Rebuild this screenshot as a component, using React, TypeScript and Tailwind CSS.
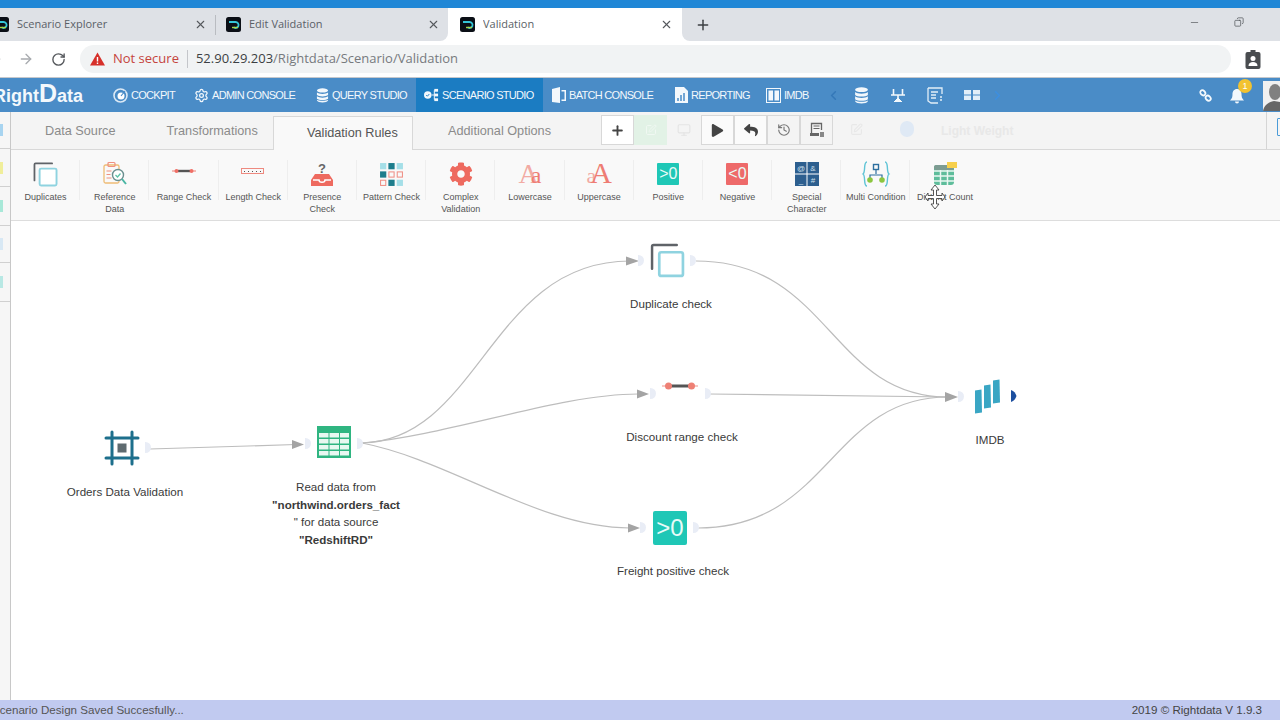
import { ArrowLeft, ArrowRight, ChevronLeft, ChevronRight, Copy, Minus, Monitor, Plus, RotateCw, Settings, SquarePen, History, X } from "lucide-react"
import { FaCog, FaPlay, FaReply } from "react-icons/fa"

function Favicon() {
    return (
        <svg width="15" height="15" viewBox="0 0 15 15" className="shrink-0">
            <rect width="15" height="15" rx="2.5" fill="#0b0f16" />
            <path d="M3 5h6.500a3 3 0 1 1-2 5.200" fill="none" stroke="#35c6d8" strokeWidth="1.800" />
            <path d="M12 10.500H6" stroke="#a7d94b" strokeWidth="1.400" />
        </svg>
    )
}

function BrowserTab({ title, className }: { title: string, className: string }) {
    return (
        <div className={`flex items-center h-full shrink-0 ${className}`}>
            <Favicon />
            <span className="ml-2 text-[11px] text-[#5a5f66] font-['Open_Sans',sans-serif] flex-1 truncate">{title}</span>
            <X size={13} strokeWidth={2} className="text-[#55585c] shrink-0" />
        </div>
    )
}

function NavItem({ icon, label, active, className }: { icon: React.ReactNode, label: string, active?: boolean, className: string }) {
    return (
        <div className={`flex items-center h-full gap-[3px] shrink-0 ${active ? "bg-[#1b7cc2]" : ""} ${className}`}>
            {icon}
            <span className="text-[11px] tracking-[-0.7px] text-[#f3f8fc] whitespace-nowrap">{label}</span>
        </div>
    )
}

function ToolButton({ children, className }: { children?: React.ReactNode, className?: string }) {
    return (
        <div className={`w-[33px] h-[30px] flex items-center justify-center border border-[#d8d8d8] ${className || ""}`}>
            {children}
        </div>
    )
}

function CockpitIcon() {
    return (
        <svg width="15" height="15" viewBox="0 0 15 15" fill="none">
            <circle cx="7.500" cy="7.500" r="6.500" stroke="#dbe9f5" strokeWidth="1.600" />
            <circle cx="8" cy="8" r="3.500" fill="#fff" />
            <path d="M8 8l4-5" stroke="#4a8cc7" strokeWidth="1.200" />
        </svg>
    )
}

function StackIcon({ size = 13 }: { size?: number }) {
    return (
        <svg width={size} height={size + 2} viewBox="0 0 14 16" fill="#f3f8fc">
            <ellipse cx="7" cy="2.500" rx="6" ry="2.300" />
            <path d="M1 4.800c2 2 10 2 12 0v2.700c-2 2-10 2-12 0zM1 8.800c2 2 10 2 12 0v2.700c-2 2-10 2-12 0z" />
            <path d="M1 12.600c2 1.600 10 1.600 12 0v.9c-1 2.800-11 2.800-12 0z" />
        </svg>
    )
}

function ScenarioIcon() {
    return (
        <svg width="15" height="14" viewBox="0 0 16 14" fill="none">
            <circle cx="4" cy="7" r="4" fill="#f3f8fc" />
            <path d="M2.300 7l1.300 1.300 2-2.300" stroke="#1b7cc2" strokeWidth="1" />
            <path d="M8 7h3M11 2v10" stroke="#f3f8fc" strokeWidth="1" />
            <rect x="11" y="0.500" width="4" height="3" fill="#f3f8fc" />
            <rect x="11" y="5.500" width="4" height="3" fill="#f3f8fc" />
            <rect x="11" y="10.500" width="4" height="3" fill="#f3f8fc" />
        </svg>
    )
}

function BatchIcon() {
    return (
        <svg width="14" height="16" viewBox="0 0 14 16" fill="#f3f8fc">
            <path d="M0 2l8-2v16l-8-1z" />
            <path d="M9.500 3H14v11H9.500v-1.500H12.500V4.500H9.500z" />
        </svg>
    )
}

function ReportIcon() {
    return (
        <svg width="13" height="16" viewBox="0 0 13 16">
            <path d="M0 0h9l4 4v12H0z" fill="#f3f8fc" />
            <path d="M3 14v-3M6 14V8M9 14V6" stroke="#4a8cc7" strokeWidth="1.500" />
        </svg>
    )
}

function ColumnsIcon() {
    return (
        <svg width="15" height="15" viewBox="0 0 15 15" fill="none">
            <rect x="0.500" y="0.500" width="14" height="14" stroke="#f3f8fc" />
            <rect x="2.500" y="2.500" width="4.500" height="10" fill="#f3f8fc" />
            <rect x="8.500" y="2.500" width="4.500" height="10" fill="#f3f8fc" />
        </svg>
    )
}

function DuplicateIcon({ size }: { size: number }) {
    return (
        <svg width={size} height={size} viewBox="0 0 34 34" fill="none">
            <path d="M2 25V3.500C2 2.500 2.500 2 3.500 2H26" stroke="#5f6368" strokeWidth="2.400" strokeLinecap="round" />
            <rect x="9" y="9" width="23" height="23" rx="2" fill="#fff" stroke="#8fd3e0" strokeWidth="2.600" />
        </svg>
    )
}

function Badge({ text, className }: { text: string, className: string }) {
    return (
        <div className={`flex items-center justify-center text-[#e9fbf8] font-['Liberation_Sans',sans-serif] ${className}`}>{text}</div>
    )
}

function Port({ className }: { className: string }) {
    return <div className={`absolute w-[6px] h-[11px] rounded-r-full bg-[#e9edf6] ${className}`} />
}

function NodeLabel({ className, children }: { className: string, children: React.ReactNode }) {
    return <div className={`absolute text-[11.600px] text-[#3a3a3a] text-center ${className}`}>{children}</div>
}

const ruleLabels: { label: React.ReactNode, icon: React.ReactNode }[] = [
    { label: "Duplicates", icon: <DuplicateIcon size={25} /> },
    {
        label: <>Reference<br />Data</>,
        icon: (
            <svg width="26" height="26" viewBox="0 0 26 26" fill="none">
                <rect x="2" y="4" width="15" height="18" rx="1.500" stroke="#eebc76" strokeWidth="1.300" />
                <rect x="6" y="1.500" width="7" height="4" rx="1" stroke="#ef8f7f" strokeWidth="1.200" />
                <path d="M4.500 10h5M4.500 13.500h4M4.500 17h5" stroke="#ef8f7f" strokeWidth="1.200" />
                <circle cx="16" cy="14" r="5.500" stroke="#6a8f8f" strokeWidth="1.400" fill="#fff" />
                <path d="M13.500 14l2 2 3-3.500" stroke="#5cc3a8" strokeWidth="1.300" />
                <path d="M20 18l4 5" stroke="#49b6a4" strokeWidth="2" />
            </svg>
        ),
    },
    {
        label: "Range Check",
        icon: (
            <svg width="26" height="26" viewBox="0 0 26 26">
                <path d="M1 10h24" stroke="#ef7f74" strokeWidth="1" />
                <path d="M7 10h12" stroke="#555" strokeWidth="2.400" />
                <circle cx="5.500" cy="10" r="2" fill="#ef6f66" />
                <circle cx="20.500" cy="10" r="2" fill="#ef6f66" />
            </svg>
        ),
    },
    {
        label: "Length Check",
        icon: (
            <svg width="26" height="26" viewBox="0 0 26 26">
                <rect x="1.500" y="7.500" width="22" height="5" fill="none" stroke="#ee8a80" strokeWidth="1" />
                <path d="M4 10.500h1M8 10.500h1M12 10.500h1M16 10.500h1M20 10.500h1" stroke="#555" strokeWidth="1.200" />
            </svg>
        ),
    },
    {
        label: <>Presence<br />Check</>,
        icon: (
            <svg width="26" height="26" viewBox="0 0 26 26">
                <path d="M2 25v-6l4-6h14l4 6v6z" fill="#ee6a5f" />
                <path d="M4 19h6c0 3 6 3 6 0h6" fill="none" stroke="#fff" strokeWidth="1.500" />
                <text x="13" y="12" textAnchor="middle" fontSize="13" fontWeight="700" fill="#666" fontFamily="Liberation Sans">?</text>
            </svg>
        ),
    },
    {
        label: "Pattern Check",
        icon: (
            <svg width="25" height="25" viewBox="0 0 24 24" fill="none">
                <rect x="1" y="1" width="6" height="6" fill="#a5dfe8" />
                <rect x="9" y="1" width="6" height="6" fill="#1d7d8c" />
                <rect x="17" y="1" width="6" height="6" fill="#a5dfe8" />
                <rect x="1" y="9" width="6" height="6" fill="#1d7d8c" />
                <rect x="9.500" y="9.500" width="5" height="5" stroke="#ef8f85" />
                <rect x="17.500" y="9.500" width="5" height="5" stroke="#ef8f85" />
                <rect x="1.500" y="17.500" width="5" height="5" stroke="#ef8f85" />
                <rect x="9" y="17" width="6" height="6" fill="#1d7d8c" />
                <rect x="17" y="17" width="6" height="6" fill="#a5dfe8" />
            </svg>
        ),
    },
    { label: <>Complex<br />Validation</>, icon: <FaCog size={24} color="#ee6a5f" /> },
    {
        label: "Lowercase",
        icon: (
            <span className="text-[28px] leading-[26px] text-[#f2aaa3] font-['Liberation_Serif',serif]">A<span className="-ml-[8px] text-[#ee7d74] text-[24px]">a</span></span>
        ),
    },
    {
        label: "Uppercase",
        icon: (
            <span className="text-[30px] leading-[26px] text-[#ee7d74] font-['Liberation_Serif',serif]"><span className="text-[#f2aaa3] text-[22px]">a</span><span className="-ml-[6px]">A</span></span>
        ),
    },
    { label: "Positive", icon: <Badge text=">0" className="bg-[#1fc7b6] w-[22px] h-[22px] text-[16px] rounded-[1px]" /> },
    { label: "Negative", icon: <Badge text="<0" className="bg-[#ee6a6a] w-[22px] h-[22px] text-[16px] rounded-[1px]" /> },
    {
        label: <>Special<br />Character</>,
        icon: (
            <svg width="24" height="24" viewBox="0 0 24 24">
                <rect width="24" height="24" fill="#2d5f8f" />
                <path d="M12 0v24M0 12h24" stroke="#fff" strokeWidth="1" />
                <text x="6" y="9" textAnchor="middle" fontSize="8" fill="#cfe0ee" fontFamily="Liberation Sans">@</text>
                <text x="18" y="9" textAnchor="middle" fontSize="8" fill="#cfe0ee" fontFamily="Liberation Sans">&amp;</text>
                <text x="6" y="21" textAnchor="middle" fontSize="8" fill="#cfe0ee" fontFamily="Liberation Sans">_</text>
                <text x="18" y="21" textAnchor="middle" fontSize="8" fill="#cfe0ee" fontFamily="Liberation Sans">#</text>
            </svg>
        ),
    },
    {
        label: "Multi Condition",
        icon: (
            <svg width="30" height="26" viewBox="0 0 30 26" fill="none">
                <path d="M6 1C2 1 5 11 2 13c3 2 0 12 4 12M24 1c4 0 1 10 4 12-3 2 0 12-4 12" stroke="#5fc4d6" strokeWidth="1.400" />
                <rect x="12.500" y="3.500" width="5" height="5" stroke="#2d6f9f" strokeWidth="1.400" />
                <path d="M15 9v4M9 18v-4h12v4" stroke="#2d6f9f" strokeWidth="1.200" />
                <circle cx="9" cy="19" r="2.800" fill="#8cc63f" />
                <circle cx="21" cy="19" r="2.800" fill="#8cc63f" />
            </svg>
        ),
    },
    {
        label: "Distinct Count",
        icon: (
            <svg width="24" height="24" viewBox="0 0 24 24">
                <rect x="1" y="3" width="20" height="20" rx="3" fill="#5ebd9b" />
                <path d="M1 9h20M1 14h20M1 19h20M7.500 8v15M14.500 8v15" stroke="#eaf7f2" strokeWidth="1.500" />
                <rect x="1" y="3" width="20" height="5" rx="2" fill="#7d9c92" />
                <rect x="14" y="0" width="10" height="6" fill="#f7d04c" />
            </svg>
        ),
    },
]

const sideBlocks = [
    { height: "h-[37px]", mark: "bg-[#a8d4f0]" },
    { height: "h-[38px]", mark: "bg-[#f0ee9a]" },
    { height: "h-[39px]", mark: "bg-[#a8e8d8]" },
    { height: "h-[37px]", mark: "bg-[#d8e8f4]" },
    { height: "h-[39px]", mark: "bg-[#b8e8e4]" },
]

export default function App() {
    return (
        <div className="w-[1280px] h-[720px] overflow-hidden flex flex-col bg-white font-['Liberation_Sans',Arial,sans-serif]">
            <div className="h-[8px] bg-[#2087d6]" />

            {/* browser tabs */}
            <div className="h-[33px] bg-white flex">
                <div className="w-[448px] bg-[#dee1e6] rounded-br-lg flex items-center shrink-0">
                    <BrowserTab title="Scenario Explorer" className="w-[213px] -ml-[6px]" />
                    <div className="w-px h-[20px] bg-[#b9bcc1] ml-[8px]" />
                    <BrowserTab title="Edit Validation" className="w-[214px] ml-[10px]" />
                </div>
                <BrowserTab title="Validation" className="w-[234px] pl-[12px] pr-[9px]" />
                <div className="flex-1 bg-[#dee1e6] rounded-bl-lg flex items-center">
                    <Plus size={16} strokeWidth={2.200} className="ml-[13px] text-[#3c3f43]" />
                    <div className="ml-auto flex items-center -mr-[9px] gap-[34px] text-[#55585c] -mt-[5px]">
                        <Minus size={11} strokeWidth={1.500} />
                        <Copy size={10} strokeWidth={1.800} className="-scale-x-100" />
                        <X size={11} strokeWidth={1.500} />
                    </div>
                </div>
            </div>

            {/* address bar */}
            <div className="h-[37px] bg-white flex items-center border-b border-[#c6c8cc] shrink-0">
                <ArrowLeft size={16} className="-ml-[13px] text-[#8a8d91] shrink-0" />
                <ArrowRight size={16} className="ml-[15px] text-[#a8abaf] shrink-0" />
                <RotateCw size={15} strokeWidth={2.200} className="ml-[17px] text-[#55585c] shrink-0" />
                <div className="ml-[14px] w-[1151px] h-[28px] rounded-full bg-[#f1f3f4] flex items-center pl-[10px] font-['Open_Sans',sans-serif] text-[13px] shrink-0">
                    <svg width="15" height="14" viewBox="0 0 15 14">
                        <path d="M7.500 0.500L15 13.500H0z" fill="#d6302a" />
                        <path d="M7.500 5v4.500M7.500 10.500v1.500" stroke="#fff" strokeWidth="1.400" />
                    </svg>
                    <span className="ml-[8px] text-[#c5443c]">Not secure</span>
                    <div className="w-px h-[18px] bg-[#c4c6ca] ml-[8px] mr-[8px]" />
                    <span className="text-[#3c3f43]">52.90.29.203</span>
                    <span className="text-[#777a7e]">/Rightdata/Scenario/Validation</span>
                </div>
                <svg width="16" height="19" viewBox="0 0 16 19" className="ml-[14px] shrink-0">
                    <rect x="0.500" y="2" width="15" height="17" rx="2" fill="#494c50" />
                    <rect x="5.500" y="0" width="5" height="4" fill="#494c50" />
                    <circle cx="8" cy="8.500" r="2.500" fill="#fff" />
                    <path d="M3.500 16c0-3 2-4 4.500-4s4.500 1 4.500 4z" fill="#fff" />
                </svg>
            </div>

            {/* app nav */}
            <div className="h-[34px] bg-[#4a8cc7] flex items-center relative shrink-0">
                <div className="w-[120px] -ml-[7px] shrink-0 text-[18px] font-bold text-[#f3f8fc] whitespace-nowrap">
                    Right<span className="text-[25px] leading-[25px]">D</span>ata
                </div>
                <NavItem className="w-[81px]" icon={<CockpitIcon />} label="COCKPIT" />
                <NavItem className="w-[122px]" icon={<Settings size={15} className="text-[#f3f8fc]" />} label="ADMIN CONSOLE" />
                <NavItem className="w-[100px]" icon={<StackIcon />} label="QUERY STUDIO" />
                <NavItem active className="w-[127px] pl-[8px]" icon={<ScenarioIcon />} label="SCENARIO STUDIO" />
                <NavItem className="w-[123px] ml-[9px]" icon={<BatchIcon />} label="BATCH CONSOLE" />
                <NavItem className="w-[91px]" icon={<ReportIcon />} label="REPORTING" />
                <NavItem className="w-[60px]" icon={<ColumnsIcon />} label="IMDB" />
                <ChevronLeft size={15} strokeWidth={2.500} className="text-[#3478b8] shrink-0" />
                <div className="ml-[12px] w-[16px] flex justify-center"><StackIcon size={15} /></div>
                <svg width="16" height="14" viewBox="0 0 16 14" className="ml-[21px]" fill="none" stroke="#f3f8fc">
                    <path d="M1 7h14M3.500 1v6M12.500 1v6M8 7v3" strokeWidth="1.600" />
                    <path d="M4 14l4-4 4 4z" fill="#f3f8fc" />
                </svg>
                <svg width="16" height="17" viewBox="0 0 16 17" className="ml-[21px]" fill="none" stroke="#e2eef8" strokeWidth="1.300">
                    <path d="M1 1h14v6M1 1v13l3 2h7" />
                    <path d="M4 5h7M4 8h5M4 11h5M13 10h2M13 13h2" />
                </svg>
                <svg width="16" height="10" viewBox="0 0 16 10" className="ml-[21px]" fill="#e2eef8">
                    <rect width="7" height="4.500" /><rect x="9" width="7" height="4.500" />
                    <rect y="5.500" width="7" height="4.500" /><rect x="9" y="5.500" width="7" height="4.500" />
                </svg>
                <ChevronRight size={15} strokeWidth={2.500} className="ml-[10px] text-[#3d8fe0] shrink-0" />
                <svg width="13" height="13" viewBox="0 0 13 13" fill="none" stroke="#f3f8fc" strokeWidth="1.800" className="absolute left-[1199px] top-[11px]">
                    <ellipse cx="3.800" cy="3.800" rx="2.800" ry="2.200" transform="rotate(45 3.800 3.800)" />
                    <ellipse cx="9.200" cy="9.200" rx="2.800" ry="2.200" transform="rotate(45 9.200 9.200)" />
                </svg>
                <svg width="14" height="15" viewBox="0 0 14 15" className="absolute left-[1230px] top-[11px]" fill="#f3f8fc">
                    <path d="M7 0c3 0 4.500 2.500 4.500 5 0 3 .5 4.500 2.500 6.500H0C2 9.500 2.500 8 2.500 5 2.500 2.500 4 0 7 0z" />
                    <path d="M5 12.500h4a2 2 0 0 1-4 0z" />
                </svg>
                <div className="absolute left-[1238px] top-[1px] w-[14px] h-[14px] rounded-full bg-[#f2c230] text-[9px] leading-[14px] text-center text-white">1</div>
                <svg width="17" height="30" viewBox="0 0 17 30" className="absolute left-[1263px] top-[3px]">
                    <rect width="17" height="30" fill="#f0f0f0" />
                    <ellipse cx="12" cy="11" rx="6" ry="8" fill="#808080" />
                    <path d="M0 30c1-6 6-9 11-10l6 1v9z" fill="#666" />
                </svg>
            </div>

            {/* main */}
            <div className="flex-1 flex min-h-0 border-t border-[#a8c6e6] -mt-px">
                <div className="w-[11px] bg-[#f6f6f6] border-r border-[#c8c8c8] shrink-0 flex flex-col">
                    {sideBlocks.map((block, i) => (
                        <div key={i} className={`${block.height} border-b border-[#d0d0d0] flex items-center`}>
                            <div className={`w-[3px] h-[12px] ${block.mark}`} />
                        </div>
                    ))}
                </div>
                <div className="flex-1 flex flex-col min-w-0">
                    <div className="h-[38px] bg-[#f4f4f4] border-b border-[#d8d8d8] flex items-end relative shrink-0">
                        <div className="flex items-center w-[262px] h-[37px] pt-[3px] text-[12.700px] text-[#8b8b8b] shrink-0">
                            <span className="ml-[34px]">Data Source</span>
                            <span className="ml-[51px]">Transformations</span>
                        </div>
                        <div className="w-[140px] h-[34px] -mb-px bg-[#f9f9f9] border border-[#d8d8d8] border-b-0 flex items-center pl-[33px] text-[12.700px] text-[#555] shrink-0">Validation Rules</div>
                        <span className="ml-[35px] h-[37px] pt-[3px] flex items-center text-[12.700px] text-[#8b8b8b]">Additional Options</span>
                        <div className="absolute left-[590px] top-[3px] flex">
                            <ToolButton className="bg-white border-[#c4c4c4]"><Plus size={15} strokeWidth={3} className="text-[#444]" /></ToolButton>
                            <ToolButton className="bg-[#e2f2e6] border-transparent"><SquarePen size={12} className="text-[#f0f8f2]" /></ToolButton>
                            <ToolButton className="border-transparent"><Monitor size={14} className="text-[#e4e4e4]" /></ToolButton>
                            <ToolButton className="bg-[#fbfbfb] border-[#c4c4c4] ml-px"><FaPlay size={13} color="#444" /></ToolButton>
                            <ToolButton className="bg-[#fbfbfb] border-[#c4c4c4]"><FaReply size={14} color="#444" /></ToolButton>
                            <ToolButton><History size={14} strokeWidth={2} className="text-[#777]" /></ToolButton>
                            <ToolButton>
                                <svg width="16" height="16" viewBox="0 0 16 16" fill="none">
                                    <path d="M2.500 13V1.500h10V8" stroke="#666" strokeWidth="1.300" />
                                    <path d="M4.500 4h6M4.500 6.500h6" stroke="#666" strokeWidth="1.200" />
                                    <path d="M1 11h9v3H1z" fill="#666" />
                                    <path d="M11 10h4v5h-4z" fill="#888" />
                                </svg>
                            </ToolButton>
                            <SquarePen size={13} className="ml-[17px] mt-[8px] text-[#e8e8e8]" />
                            <div className="ml-[37px] mt-[6px] w-[14px] h-[16px] rounded-full bg-[#dfe9f5]" />
                            <span className="ml-[27px] mt-[7px] text-[12px] text-[#e8e8e8] font-bold whitespace-nowrap">Light Weight</span>
                        </div>
                        <div className="absolute left-[1255px] top-0 bottom-0 w-px bg-[#d5d5d5]" />
                        <div className="absolute left-[1266px] top-[6px] w-[10px] h-[18px] border border-[#4a9bd8] rounded-[1px]" />
                    </div>

                    <div className="h-[71px] bg-[#f9f9f9] border-b border-[#dddddd] flex shrink-0">
                        {ruleLabels.map((rule, i) => (
                            <div key={i} className="w-[69.2px] shrink-0 flex flex-col items-center relative">
                                <div className="h-[26px] mt-[11px] flex items-center justify-center">{rule.icon}</div>
                                <div className="mt-[4px] text-[9px] leading-[12px] text-[#555] text-center whitespace-nowrap">{rule.label}</div>
                                {i < ruleLabels.length - 1 && <div className="absolute right-0 top-[10px] h-[40px] w-px bg-[#eeeeee]" />}
                            </div>
                        ))}
                    </div>

                    {/* canvas */}
                    <div className="flex-1 relative">
                        <svg width="1269" height="479" viewBox="11 221 1269 479" fill="none" className="absolute left-0 top-0">
                            <g stroke="#bdbdbd" strokeWidth="1.200">
                                <path d="M150 449L296 444.500" />
                                <path d="M362 443C480 440 490 261 630 261" />
                                <path d="M362 443C450 435 560 394 638 394" />
                                <path d="M362 443C450 460 540 528 630 528" />
                                <path d="M696 261C830 261 830 397 948 397" />
                                <path d="M709 394L948 397" />
                                <path d="M698 528C830 528 830 397 948 397" />
                            </g>
                            <g fill="#a4a4a4">
                                <path d="M292 440l12 4.500-12 4.500z" />
                                <path d="M626 256.500l13 4.500-13 4.500z" />
                                <path d="M637 389.500l12 4.500-12 4.500z" />
                                <path d="M628 523.500l12 4.500-12 4.500z" />
                                <path d="M945 392l13 5-13 5z" />
                            </g>
                        </svg>

                        <Port className="left-[134px] top-[221px]" />
                        <Port className="left-[294px] top-[217px]" />
                        <Port className="left-[346px] top-[217px]" />
                        <Port className="left-[627px] top-[34px]" />
                        <Port className="left-[679px] top-[34px]" />
                        <Port className="left-[639px] top-[167px]" />
                        <Port className="left-[694px] top-[167px]" />
                        <Port className="left-[629px] top-[301px]" />
                        <Port className="left-[682px] top-[301px]" />
                        <Port className="left-[947px] top-[170px]" />

                        {/* nodes */}
                        <div className="absolute left-[639px] top-[22px]"><DuplicateIcon size={35} /></div>
                        <svg width="36" height="36" viewBox="0 0 36 36" className="absolute left-[93px] top-[209px]" fill="none">
                            <path d="M2 8h32M2 28h32M8 2v32M28 2v32" stroke="#1d6f8c" strokeWidth="3" strokeLinecap="round" />
                            <rect x="13.500" y="13.500" width="9" height="9" fill="#5f6b70" />
                        </svg>
                        <svg width="34" height="32" viewBox="0 0 34 32" className="absolute left-[306px] top-[205px]">
                            <rect width="34" height="32" fill="#2fb581" />
                            <g fill="#e8f8f1">
                                <rect x="2" y="7" width="9.500" height="4.500" /><rect x="12.500" y="7" width="9.500" height="4.500" /><rect x="23" y="7" width="9" height="4.500" />
                                <rect x="2" y="13" width="9.500" height="4.500" /><rect x="12.500" y="13" width="9.500" height="4.500" /><rect x="23" y="13" width="9" height="4.500" />
                                <rect x="2" y="19" width="9.500" height="4.500" /><rect x="12.500" y="19" width="9.500" height="4.500" /><rect x="23" y="19" width="9" height="4.500" />
                                <rect x="2" y="25" width="9.500" height="4.500" /><rect x="12.500" y="25" width="9.500" height="4.500" /><rect x="23" y="25" width="9" height="4.500" />
                            </g>
                        </svg>
                        <svg width="36" height="16" viewBox="0 0 36 16" className="absolute left-[651px] top-[157px]">
                            <path d="M0 8h36" stroke="#ef8f85" strokeWidth="1" />
                            <path d="M8 8h20" stroke="#555" strokeWidth="3" />
                            <circle cx="6.500" cy="8" r="3.500" fill="#ee8075" />
                            <circle cx="29.500" cy="8" r="3.500" fill="#ee8075" />
                        </svg>
                        <Badge text=">0" className="absolute left-[642px] top-[290px] w-[34px] h-[34px] rounded-[2px] bg-[#1fc7b6] text-[24px]" />
                        <svg width="44" height="36" viewBox="0 0 44 36" className="absolute left-[963px] top-[158px]">
                            <path d="M1 11.500l6.500-1 .5 23-7 1z" fill="#3aa6c4" />
                            <path d="M10 6.500l6.500-1 .5 23-7 1z" fill="#3aa6c4" />
                            <path d="M19 1.500l6.500-1 .5 23-7 1z" fill="#3aa6c4" />
                            <path d="M37 11c3 1 4.500 3 5.500 6-1 3-2.500 5-5.500 6z" fill="#1d4f9f" />
                        </svg>

                        <NodeLabel className="left-[36px] top-[262px] w-[156px]">Orders Data Validation</NodeLabel>
                        <NodeLabel className="left-[245px] top-[257px] w-[160px] leading-[17.5px]">
                            Read data from<br /><b>"northwind.orders_fact</b><br />" for data source<br /><b>"RedshiftRD"</b>
                        </NodeLabel>
                        <NodeLabel className="left-[580px] top-[74px] w-[160px]">Duplicate check</NodeLabel>
                        <NodeLabel className="left-[591px] top-[207px] w-[160px]">Discount range check</NodeLabel>
                        <NodeLabel className="left-[582px] top-[341px] w-[160px]">Freight positive check</NodeLabel>
                        <NodeLabel className="left-[949px] top-[210px] w-[60px]">IMDB</NodeLabel>

                        {/* drag cursor over the toolbar */}
                        <svg width="22" height="26" viewBox="0 0 22 26" className="absolute left-[913px] -top-[37px]">
                            <path d="M11 1l4 5h-2.500v5.500H18V9l3 4-3 4v-2.500h-5.500V20H15l-4 5-4-5h2.500v-5.500H4V17l-3-4 3-4v2.500h5.500V6H7z" fill="#fff" stroke="#444" strokeWidth="0.900" />
                        </svg>
                    </div>
                </div>
            </div>

            {/* status bar */}
            <div className="h-[20px] bg-[#c1caf0] flex items-center justify-between text-[11.600px] text-[#555] shrink-0">
                <span className="-ml-[8px]">Scenario Design Saved Succesfully...</span>
                <span className="mr-[18px] text-[#444]">2019 © Rightdata V 1.9.3</span>
            </div>
        </div>
    )
}
